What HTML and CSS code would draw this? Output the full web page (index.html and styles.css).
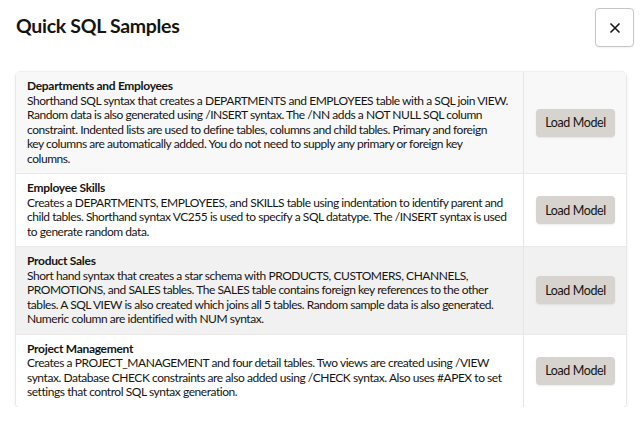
FILE: index.html
```html
<!DOCTYPE html>
<html>
<head>
<meta charset="utf-8">
<link rel="stylesheet" href="styles.css">
</head>
<body>
<div class="dialog">
  <header class="header">
    <h1 class="title">Quick SQL Samples</h1>
    <button class="close" aria-label="Close">
      <svg width="12" height="12" viewBox="0 0 12 12"><path d="M1.5 1.5 L10.5 10.5 M10.5 1.5 L1.5 10.5" stroke="#1a1816" stroke-width="1.6" fill="none"/></svg>
    </button>
  </header>
  <div class="card">
    <div class="row alt">
      <div class="desc">
        <div class="name">Departments and Employees</div>
        <div class="text">Shorthand SQL syntax that creates a DEPARTMENTS and EMPLOYEES table with a SQL join VIEW.<br>Random data is also generated using /INSERT syntax. The /NN adds a NOT NULL SQL column<br>constraint. Indented lists are used to define tables, columns and child tables. Primary and foreign<br>key columns are automatically added. You do not need to supply any primary or foreign key<br>columns.</div>
      </div>
      <div class="action"><button class="load">Load Model</button></div>
    </div>
    <div class="row">
      <div class="desc">
        <div class="name">Employee Skills</div>
        <div class="text">Creates a DEPARTMENTS, EMPLOYEES, and SKILLS table using indentation to identify parent and<br>child tables. Shorthand syntax VC255 is used to specify a SQL datatype. The /INSERT syntax is used<br>to generate random data.</div>
      </div>
      <div class="action"><button class="load">Load Model</button></div>
    </div>
    <div class="row alt2">
      <div class="desc">
        <div class="name">Product Sales</div>
        <div class="text">Short hand syntax that creates a star schema with PRODUCTS, CUSTOMERS, CHANNELS,<br>PROMOTIONS, and SALES tables. The SALES table contains foreign key references to the other<br>tables. A SQL VIEW is also created which joins all 5 tables. Random sample data is also generated.<br>Numeric column are identified with NUM syntax.</div>
      </div>
      <div class="action"><button class="load">Load Model</button></div>
    </div>
    <div class="row">
      <div class="desc">
        <div class="name">Project Management</div>
        <div class="text">Creates a PROJECT_MANAGEMENT and four detail tables. Two views are created using /VIEW<br>syntax. Database CHECK constraints are also added using /CHECK syntax. Also uses #APEX to set<br>settings that control SQL syntax generation.</div>
      </div>
      <div class="action"><button class="load">Load Model</button></div>
    </div>
  </div>
</div>
</body>
</html>
```
FILE: styles.css
```css
html, body {
  margin: 0;
  padding: 0;
  background: #ffffff;
}
body {
  font-family: "Lato", "Noto Sans", sans-serif;
  color: #161513;
}
.dialog {
  padding: 8px 6px 0 16px;
}
.header {
  display: flex;
  justify-content: space-between;
  align-items: center;
  height: 39px;
}
.title {
  margin: 0 0 4px 0;
  font-size: 19.5px;
  font-weight: 700;
  letter-spacing: -0.3px;
}
.close {
  width: 39px;
  height: 39px;
  padding: 0;
  border: 1px solid #c8c6c3;
  border-radius: 4px;
  background: #fff;
  display: flex;
  align-items: center;
  justify-content: center;
  box-shadow: 0 1px 2px rgba(0,0,0,0.06);
}
.card {
  margin-top: 25px;
  width: 610px;
  border-radius: 4px;
  box-shadow: 0 0 0 1px rgba(0,0,0,0.05), 0 2px 4px rgba(0,0,0,0.1);
  overflow: hidden;
}
.row {
  display: flex;
  background: #fff;
  border-top: 1px solid #ebe9e7;
}
.row:first-child { border-top: none; }
.row.alt { background: #f8f8f8; }
.row.alt2 { background: #f1f1f1; }
.desc {
  flex: 1;
  min-width: 0;
  padding: 7px 8px 7px 11px;
  border-right: 1px solid #e8e6e4;
}
.name {
  font-size: 12px;
  font-weight: 700;
  line-height: 14.5px;
  letter-spacing: -0.3px;
}
.text {
  font-size: 12px;
  line-height: 14.5px;
  letter-spacing: -0.45px;
  white-space: nowrap;
}
.action {
  width: 101px;
  flex: none;
  display: flex;
  align-items: center;
  justify-content: center;
  padding-left: 1px;
}
.load {
  font-family: inherit;
  font-size: 12.5px;
  letter-spacing: -0.4px;
  color: #161513;
  background: #d7d3cf;
  border: none;
  border-radius: 4px;
  height: 28px;
  padding: 0 9px;
  box-shadow: 0 1px 2px rgba(0,0,0,0.08);
}
```
